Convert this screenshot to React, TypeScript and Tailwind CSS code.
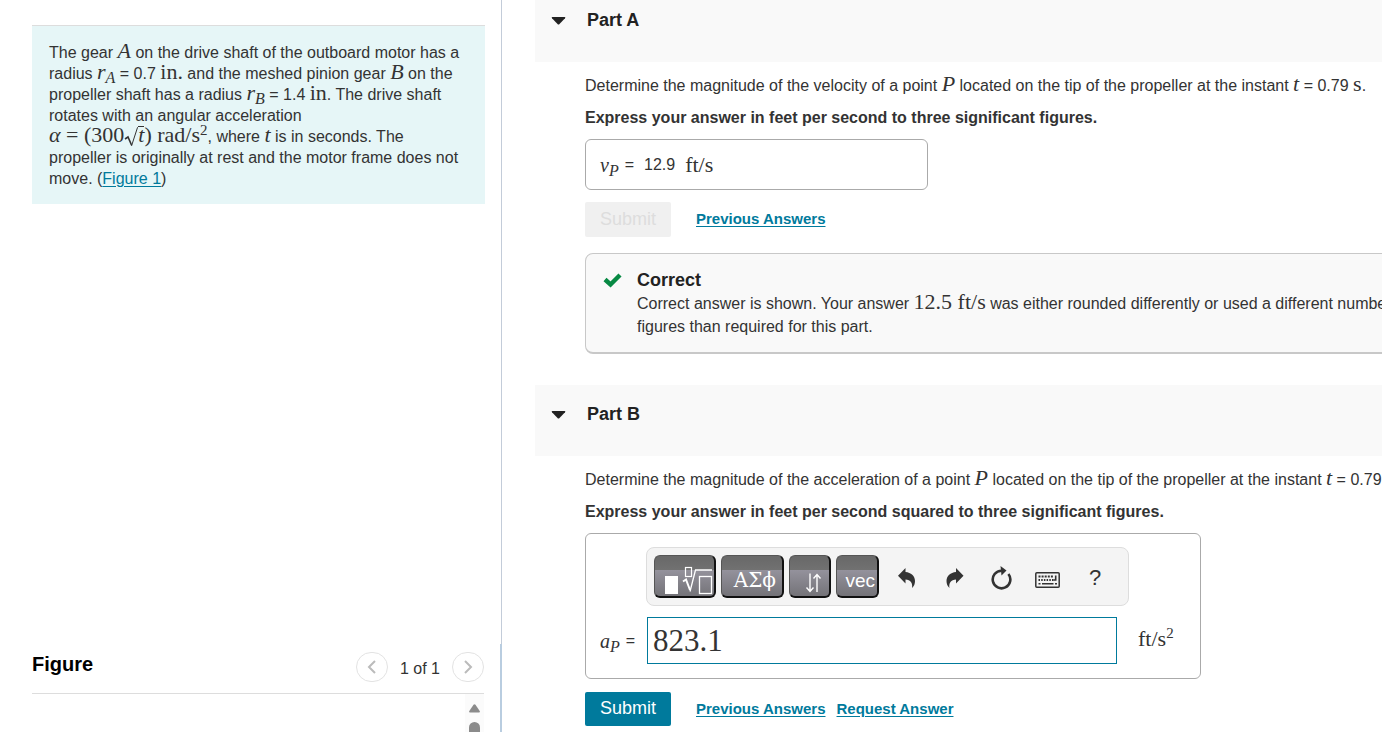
import React from 'react';

const M: React.FC<{ children: React.ReactNode; italic?: boolean }> = ({ children, italic }) => (
  <span
    className={`font-['Liberation_Serif',serif] text-[22px] leading-[0] whitespace-nowrap ${italic ? 'italic' : ''}`}
  >
    {children}
  </span>
);

// Smaller math used for the answer labels
const Label: React.FC<{ name: string; sub: string }> = ({ name, sub }) => (
  <i className="font-['Liberation_Serif',serif] text-xl leading-none">
    {name}
    <Sub>{sub}</Sub>
  </i>
);

const Sub: React.FC<{ children: React.ReactNode }> = ({ children }) => (
  <sub className="text-base leading-[0]">{children}</sub>
);

const Sup: React.FC<{ children: React.ReactNode }> = ({ children }) => (
  <sup className="text-[15px] leading-[0]">{children}</sup>
);

const SquareRoot: React.FC<{ children: React.ReactNode }> = ({ children }) => (
  <>
    <svg
      width="14"
      height="20"
      viewBox="0 0 14 20"
      fill="none"
      stroke="currentColor"
      className="inline-block align-[-5px]"
    >
      <path d="M1 12 L4 10 L7.5 18" strokeWidth="1.6" />
      <path d="M7.5 19 L13.5 0.5 H14" strokeWidth="1" />
    </svg>
    <span className="inline-block border-t border-current italic leading-4">{children}</span>
  </>
);

const TextLink: React.FC<{ children: React.ReactNode }> = ({ children }) => (
  <a href="#" className="text-[15px] font-bold text-[#007a9c] underline underline-offset-2">
    {children}
  </a>
);

const PartHeader: React.FC<{ title: string; className: string }> = ({ title, className }) => (
  <header className={`bg-[#f9f9f9] pl-4 ${className}`}>
    <h2>
      <button className="flex items-center gap-[21px] text-lg font-bold leading-[21px] text-[#222]">
        <svg width="15" height="8" viewBox="0 0 15 8" fill="currentColor">
          <path d="M1.5 0 H13.5 Q15 0 14 1.2 L8.5 7 Q7.5 8 6.5 7 L1 1.2 Q0 0 1.5 0Z" />
        </svg>
        {title}
      </button>
    </h2>
  </header>
);

const TOOL_BUTTON =
  'flex h-[43px] items-end justify-end overflow-hidden rounded-md border border-r-2 border-b-2 border-[#111] border-t-[#555] border-l-[#555] bg-[linear-gradient(#686868,#717171_34%,#94929c_35%,#747378)] text-white';

const MathToolbar: React.FC = () => (
  <div
    role="toolbar"
    className="flex h-[59px] items-center gap-[5px] rounded-lg border border-[#ddd] bg-[#f4f4f4] px-[7px] text-[#333]"
  >
    <button aria-label="Templates" className={`${TOOL_BUTTON} w-[62px]`}>
      <svg width="50" height="30" viewBox="0 0 50 30" fill="none" stroke="#fff">
        <rect x="1" y="10" width="13" height="18" fill="#fff" stroke="none" />
        <rect x="21.5" y="1.5" width="6" height="9" strokeWidth="1.2" />
        <path d="M19 15.5 L22 13.5 L26 24" strokeWidth="2" />
        <path d="M26 25.5 L31.5 4 H48" strokeWidth="1.3" />
        <rect x="35.5" y="10.5" width="12" height="17" strokeWidth="1.3" />
      </svg>
    </button>
    <button
      aria-label="Symbols"
      className={`${TOOL_BUTTON} w-[63px] pr-[6px] pb-1 font-['DejaVu_Serif',serif] text-xl leading-6`}
    >
      ΑΣϕ
    </button>
    <button aria-label="Arrows" className={`${TOOL_BUTTON} w-[42px] pr-[7px] pb-[3px]`}>
      <svg width="17" height="20" viewBox="0 0 17 20" fill="none" stroke="currentColor" strokeWidth="1.4">
        <path d="M5 0.5 V18 M1.5 14.5 L5 18.5 L8.5 14.5" />
        <path d="M12 19 V2 M8.5 5.5 L12 1.5 L15.5 5.5" />
      </svg>
    </button>
    <button className={`${TOOL_BUTTON} w-[43px] pr-[2px] pb-[3px] text-[19px] leading-6`}>vec</button>

    <div className="ml-[14px] flex flex-1 items-center pt-[3px]">
      <button aria-label="Undo" className="w-12">
        <svg width="17" height="20" viewBox="0 0 17 20" fill="currentColor">
          <path d="M0 7.7 L7.5 0 V4 C13 4.5 17 8 17 13 C17 16 16 18 14 20 C15 15.5 12.5 11.5 7.5 11.5 V15.5Z" />
        </svg>
      </button>
      <button aria-label="Redo" className="w-[45px]">
        <svg width="18" height="20" viewBox="0 0 17 20" fill="currentColor">
          <path d="M17 7.7 L9.5 0 V4 C4 4.5 0 8 0 13 C0 16 1 18 3 20 C2 15.5 4.5 11.5 9.5 11.5 V15.5Z" />
        </svg>
      </button>
      <button aria-label="Reset" className="w-[44px]">
        <svg width="21" height="24" viewBox="0 0 21 24" fill="none" stroke="currentColor" strokeWidth="2.6">
          <path d="M10.5 4.7 A8.8 8.8 0 1 0 17.4 8" />
          <path d="M9.5 0 L15.5 4.5 L10.5 9.5 Z" fill="currentColor" stroke="none" />
        </svg>
      </button>
      <button aria-label="Keyboard" className="w-[54px] pt-1">
        <svg width="25" height="16" viewBox="0 0 25 16" fill="none" stroke="currentColor">
          <rect x="0.8" y="0.8" width="23.4" height="14.4" rx="1" strokeWidth="1.5" />
          <path d="M3.5 4.5 H19" strokeWidth="1.8" strokeDasharray="2 1.1" />
          <path d="M3.5 8 H18.5" strokeWidth="1.8" strokeDasharray="1.5 1.2" />
          <path d="M20.7 3.6 V8 H18.5" strokeWidth="1.6" />
          <path d="M3.5 11.7 H5.5 M7 11.7 H18.5 M20 11.7 H22" strokeWidth="1.6" />
        </svg>
      </button>
      <button aria-label="Help" className="text-[22px] leading-6">
        ?
      </button>
    </div>
  </div>
);

const ProblemPanel: React.FC = () => (
  <aside className="flex w-[502px] shrink-0 flex-col">
    <div className="flex-1 border-r border-[#c3ccd9] pt-[25px] pr-4 pl-8">
      <p className="border-t border-[#ddd] bg-[#e6f6f7] pt-4 pr-3 pb-[15px] pl-[17px] leading-[21px] whitespace-nowrap">
        The gear <M italic>A</M> on the drive shaft of the outboard motor has a<br />
        radius <M italic>r<Sub>A</Sub></M> = 0.7 <M>in.</M> and the meshed pinion gear <M italic>B</M> on the<br />
        propeller shaft has a radius <M italic>r<Sub>B</Sub></M> = 1.4 <M>in</M>. The drive shaft<br />
        rotates with an angular acceleration<br />
        <M>
          <i>α</i> = (300<SquareRoot>t</SquareRoot>) rad/s<Sup>2</Sup>
        </M>
        , where <M italic>t</M> is in seconds. The<br />
        propeller is originally at rest and the motor frame does not<br />
        move. (<a href="#figure" className="text-[#007a9c] underline underline-offset-2">Figure 1</a>)
      </p>
    </div>

    <section id="figure" className="border-r-2 border-[#b9cde0] pt-2 pr-4 pl-8">
      <div className="flex h-[42px] items-start justify-between border-b border-[#ddd]">
        <h2 className="text-xl font-bold leading-6 text-black">Figure</h2>
        <div className="flex items-center gap-3">
          <button
            aria-label="Previous figure"
            className="flex h-[30px] w-8 items-center justify-center rounded-full border border-[#e3e3e3] text-[#bbb]"
          >
            <svg width="9" height="14" viewBox="0 0 9 14" fill="none" stroke="currentColor" strokeWidth="2">
              <path d="M8 1 L2 7 L8 13" />
            </svg>
          </button>
          <span className="pt-1">1 of 1</span>
          <button
            aria-label="Next figure"
            className="flex h-[30px] w-8 items-center justify-center rounded-full border border-[#e3e3e3] text-[#bbb]"
          >
            <svg width="9" height="14" viewBox="0 0 9 14" fill="none" stroke="currentColor" strokeWidth="2">
              <path d="M1 1 L7 7 L1 13" />
            </svg>
          </button>
        </div>
      </div>
      <div className="flex h-[38px] justify-end overflow-hidden">
        <div className="flex w-[19px] flex-col items-center bg-[#fbfbfb] pt-[10px] text-[#8b8b8b]">
          <svg width="11" height="9" viewBox="0 0 11 9" fill="currentColor" className="shrink-0">
            <path d="M4.5 0.8 Q5.5 -0.4 6.5 0.8 L10.7 7 Q11.4 8.5 10 8.5 H1 Q-0.4 8.5 0.3 7Z" />
          </svg>
          <div className="mt-[9px] h-20 w-[11px] shrink-0 rounded-full bg-current" />
        </div>
      </div>
    </section>
  </aside>
);

const App: React.FC = () => {
  return (
    <div className="flex h-screen overflow-hidden bg-white font-['Liberation_Sans',Arial,sans-serif] text-base text-[#333]">
      <ProblemPanel />

      <main className="min-w-0 flex-1 overflow-hidden pl-[33px] whitespace-nowrap">
        {/* Part A */}
        <section>
          <PartHeader title="Part A" className="pt-[10px] pb-[31px]" />
          <div className="pt-[14px] pl-[50px]">
            <p className="leading-5">
              Determine the magnitude of the velocity of a point <M italic>P</M> located on the tip of the propeller at
              the instant <M italic>t</M> = 0.79 <M>s</M>.
            </p>
            <p className="mt-3 font-bold leading-5">
              Express your answer in feet per second to three significant figures.
            </p>
            <div className="mt-[11px] flex h-[51px] w-[343px] items-center rounded-md border border-[#aaa] pl-[14px]">
              <Label name="v" sub="P" />
              <span className="ml-[6px]">=</span>
              <span className="mx-[10px]">12.9</span>
              <M>ft/s</M>
            </div>
            <div className="mt-3 flex items-center">
              <button
                disabled
                className="mr-[25px] h-[35px] w-[86px] rounded-xs bg-[#f0f0f0] pb-0.5 text-lg text-[#ddd]"
              >
                Submit
              </button>
              <TextLink>Previous Answers</TextLink>
            </div>
            <div className="mt-4 -mr-2 flex h-[101px] gap-[15px] rounded-lg border border-b-2 border-[#c8c8c8] bg-[#f9f9f9] pt-[15px] pl-[17px] leading-[23px]">
              <svg width="19" height="15" viewBox="0 0 19 15" fill="none" stroke="#078943" className="mt-1 shrink-0">
                <path d="M2 6.5 L7.5 11.5 L17 2" strokeWidth="4.4" />
              </svg>
              <div>
                <h3 className="text-lg font-bold leading-[23px] text-[#222]">Correct</h3>
                <p>
                  Correct answer is shown. Your answer <M>12.5 ft/s</M> was either rounded differently or used a
                  different number of significant
                  <br />
                  figures than required for this part.
                </p>
              </div>
            </div>
          </div>
        </section>

        {/* Part B */}
        <section className="mt-[31px]">
          <PartHeader title="Part B" className="pt-[19px] pb-[31px]" />
          <div className="pt-[14px] pl-[50px]">
            <p className="leading-5">
              Determine the magnitude of the acceleration of a point <M italic>P</M> located on the tip of the
              propeller at the instant <M italic>t</M> = 0.79 <M>s</M>.
            </p>
            <p className="mt-3 font-bold leading-5">
              Express your answer in feet per second squared to three significant figures.
            </p>
            <div className="mt-[11px] grid h-[146px] w-[616px] grid-cols-[47px_470px_auto] content-start items-center gap-y-[11px] rounded-md border border-[#aaa] pt-[13px] pl-[14px]">
              <div className="col-start-2 -ml-px w-[483px]">
                <MathToolbar />
              </div>
              <label htmlFor="answer-b" className="col-start-1 flex items-center">
                <Label name="a" sub="P" />
                <span className="ml-[6px]">=</span>
              </label>
              <input
                id="answer-b"
                type="text"
                defaultValue="823.1"
                className="h-[47px] border border-[#007a9c] bg-white px-[5px] font-['Liberation_Serif',serif] text-[31px] leading-10 outline-none"
              />
              <span className="pl-[21px]">
                <M>
                  ft/s<Sup>2</Sup>
                </M>
              </span>
            </div>
            <div className="mt-[13px] flex items-center">
              <button className="mr-[25px] h-[34px] w-[86px] rounded-xs bg-[#007a9c] pb-0.5 text-lg text-white">
                Submit
              </button>
              <TextLink>Previous Answers</TextLink>
              <span className="w-[11px]" />
              <TextLink>Request Answer</TextLink>
            </div>
          </div>
        </section>
      </main>
    </div>
  );
};

export default App;
